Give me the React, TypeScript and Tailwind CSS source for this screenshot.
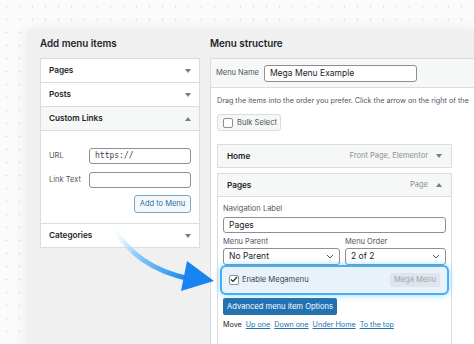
import React from "react";

function Tri({ up = false }: { up?: boolean }) {
  return (
    <svg width="6" height="4" viewBox="0 0 6 4" className="shrink-0">
      <polygon points={up ? "0,4 6,4 3,0" : "0,0 6,0 3,4"} fill="#787c82" />
    </svg>
  );
}

function Chevron() {
  return (
    <svg width="8" height="5" viewBox="0 0 8 5" className="shrink-0">
      <polyline points="1,1 4,4 7,1" fill="none" stroke="#50575e" strokeWidth="1" />
    </svg>
  );
}

function Box({ checked = false }: { checked?: boolean }) {
  return (
    <span className="flex h-[10px] w-[10px] shrink-0 items-center justify-center rounded-[2px] border border-[#8c8f94] bg-white">
      {checked && (
        <svg width="8" height="7" viewBox="0 0 8 7">
          <polyline points="1,3.5 3,5.5 7,1" fill="none" stroke="#1d2327" strokeWidth="1.2" />
        </svg>
      )}
    </span>
  );
}

function Row({ label, up = false, shade = false }: { label: string; up?: boolean; shade?: boolean }) {
  return (
    <div
      className={`flex h-[24px] items-center justify-between border-b border-[#dcdcde] px-[8px] text-[8.2px] font-semibold ${
        shade ? "bg-[#f6f7f7]" : "bg-white"
      }`}
    >
      <span>{label}</span>
      <Tri up={up} />
    </div>
  );
}

function Input({ value = "", className = "" }: { value?: string; className?: string }) {
  return (
    <div
      className={`flex h-[16px] items-center rounded-[3px] border border-[#8c8f94] bg-white px-[5px] text-[8.5px] ${className}`}
    >
      {value}
    </div>
  );
}

export default function App() {
  return (
    <div className="relative h-[344px] w-[474px] overflow-hidden bg-[#fbfbfb] bg-[radial-gradient(circle,#e2e2e2_0.8px,transparent_1.3px)] bg-[length:13px_13px] font-['Inter',sans-serif] text-[#1d2327]">
      <div className="ml-[27px] mt-[30px] h-[360px] bg-[#f0f0f1] pl-[13px] pt-[8px] shadow-[0_0_14px_rgba(0,0,0,0.08)]">
        <div className="flex gap-[10px]">
          {/* left column */}
          <div className="w-[160px] shrink-0">
            <h2 className="mb-[8px] text-[9.8px] leading-[12px] font-semibold">Add menu items</h2>
            <div className="border-x border-t border-[#dcdcde] bg-white">
              <Row label="Pages" />
              <Row label="Posts" />
              <Row label="Custom Links" up shade />
              <div className="border-b border-[#dcdcde] px-[8px] pb-[10px] pt-[17px] text-[7.5px] text-[#50575e]">
                <div className="flex items-center justify-between">
                  <span>URL</span>
                  <Input value="https://" className="w-[102px] font-['DejaVu_Sans_Mono',monospace] text-[8px] text-[#3c434a]" />
                </div>
                <div className="mt-[8px] flex items-center justify-between">
                  <span>Link Text</span>
                  <Input className="w-[102px]" />
                </div>
                <div className="mt-[7px] flex justify-end">
                  <button className="h-[18px] w-[57px] rounded-[3px] border border-[#7aa7cf] bg-[#f6f7f7] text-[7.5px] text-[#2271b1]">
                    Add to Menu
                  </button>
                </div>
              </div>
              <Row label="Categories" />
            </div>
          </div>

          {/* right column */}
          <div className="w-[300px] shrink-0">
            <h2 className="mb-[8px] text-[9.8px] leading-[12px] font-semibold">Menu structure</h2>
            <div className="h-[320px] border border-[#dcdcde] bg-white">
              <div className="flex h-[29px] items-center border-b border-[#dcdcde] bg-[#f6f7f7] px-[5px]">
                <span className="text-[7.5px] text-[#50575e]">Menu Name</span>
                <Input value="Mega Menu Example" className="ml-[5px] h-[17px] w-[153px] text-[8.2px]" />
              </div>
              <div className="px-[6px]">
                <p className="whitespace-nowrap pt-[7px] text-[7.2px] leading-[12px] text-[#50575e]">
                  Drag the items into the order you prefer. Click the arrow on the right of the
                </p>
                <div className="mt-[7px] flex h-[17px] w-[64px] items-center gap-[4px] whitespace-nowrap rounded-[3px] border border-[#dcdcde] bg-[#f6f7f7] px-[5px] text-[7.6px] text-[#50575e]">
                  <Box />
                  <span>Bulk Select</span>
                </div>

                <div className="mt-[13px] flex h-[24px] w-[235px] items-center justify-between border border-[#dcdcde] bg-[#f6f7f7] px-[9px]">
                  <span className="text-[8.2px] font-semibold">Home</span>
                  <span className="flex items-center gap-[8px] text-[7.5px] text-[#8c8f94]">
                    Front Page, Elementor
                    <Tri />
                  </span>
                </div>

                <div className="mt-[5px] w-[235px]">
                  <div className="flex h-[24px] items-center justify-between border border-[#dcdcde] bg-[#f6f7f7] px-[9px]">
                    <span className="text-[8.2px] font-semibold">Pages</span>
                    <span className="flex items-center gap-[8px] text-[7.5px] text-[#8c8f94]">
                      Page
                      <Tri up />
                    </span>
                  </div>
                  <div className="h-[200px] border-x border-[#dcdcde] px-[5px]">
                    <div className="pt-[6px] text-[7.5px] leading-[12px] text-[#50575e]">Navigation Label</div>
                    <Input value="Pages" className="mt-[2px]" />
                    <div className="mt-[3px] flex gap-[5px]">
                      <div className="w-[117px]">
                        <div className="text-[7.5px] leading-[12px] text-[#50575e]">Menu Parent</div>
                        <div className="flex h-[17px] items-center justify-between rounded-[3px] border border-[#8c8f94] bg-white px-[5px] text-[8.5px]">
                          No Parent
                          <Chevron />
                        </div>
                      </div>
                      <div className="flex-1">
                        <div className="text-[7.5px] leading-[12px] text-[#50575e]">Menu Order</div>
                        <div className="flex h-[17px] items-center justify-between rounded-[3px] border border-[#8c8f94] bg-white px-[5px] text-[8.5px]">
                          2 of 2
                          <Chevron />
                        </div>
                      </div>
                    </div>
                    <div className="relative -mx-[3px] flex h-[30px] items-center justify-between rounded-[6px] border-2 border-[#3fb1f4] bg-[#e9f2fb] px-[7px] shadow-[0_0_6px_rgba(63,177,244,0.55)]">
                      <span className="flex items-center gap-[3px] text-[7.6px] text-[#3c434a]">
                        <Box checked />
                        Enable Megamenu
                      </span>
                      <span className="rounded-[2px] bg-[#dfe5ec] px-[4px] py-[1px] text-[7.5px] text-[#a0a5aa]">
                        Mega Menu
                      </span>
                    </div>
                    <button className="mt-[3px] flex h-[17px] w-[114px] items-center justify-center rounded-[2px] bg-[#2271b1] text-[7.6px] text-white">
                      Advanced menu item Options
                    </button>
                    <div className="mt-[4px] flex gap-[4px] text-[7.2px] leading-[12px]">
                      <span>Move</span>
                      <span className="text-[#2271b1] underline">Up one</span>
                      <span className="text-[#2271b1] underline">Down one</span>
                      <span className="text-[#2271b1] underline">Under Home</span>
                      <span className="text-[#2271b1] underline">To the top</span>
                    </div>
                  </div>
                </div>
              </div>
            </div>
          </div>
        </div>
      </div>

      {/* arrow overlay */}
      <svg className="pointer-events-none absolute inset-0" width="474" height="344" viewBox="0 0 474 344">
        <defs>
          <linearGradient id="arr" gradientUnits="userSpaceOnUse" x1="113" y1="228" x2="190" y2="279">
            <stop offset="0" stopColor="#ffffff" stopOpacity="0.2" />
            <stop offset="0.35" stopColor="#8fd0f8" />
            <stop offset="1" stopColor="#1784f0" />
          </linearGradient>
        </defs>
        <path d="M113 228 C 130 254, 152 271, 190 279" fill="none" stroke="url(#arr)" strokeWidth="5" strokeLinecap="round" />
        <polygon points="187,261 181,291 214,281" fill="#1784f0" />
      </svg>
    </div>
  );
}
